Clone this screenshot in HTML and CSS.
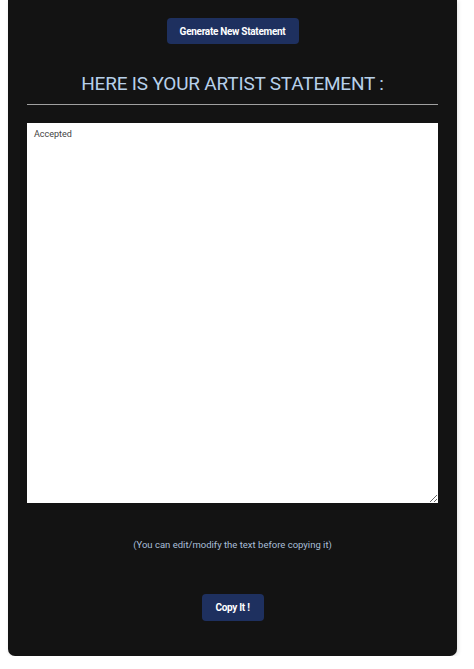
FILE: index.html
```html
<!DOCTYPE html>
<html>
<head>
<meta charset="utf-8">
<link rel="stylesheet" href="styles.css">
</head>
<body>
<div class="card">
  <button class="btn btn-gen">Generate New Statement</button>
  <h1 class="title">HERE IS YOUR ARTIST STATEMENT :</h1>
  <hr class="rule">
  <textarea class="statement">Accepted</textarea>
  <p class="hint">(You can edit/modify the text before copying it)</p>
  <button class="btn btn-copy">Copy It !</button>
</div>
</body>
</html>
```
FILE: styles.css
```css
html, body {
  margin: 0;
  padding: 0;
  background: #ffffff;
  font-family: Roboto, "Liberation Sans", sans-serif;
}
.card {
  width: 449px;
  margin-left: 8px;
  height: 656px;
  box-sizing: border-box;
  background: #131313;
  border-radius: 0 0 7px 7px;
  box-shadow: 1px 1px 4px rgba(0,0,0,0.12);
  display: flex;
  flex-direction: column;
  align-items: center;
  padding-top: 18px;
}
.btn {
  background: #1e305f;
  color: #ffffff;
  border: none;
  border-radius: 4px;
  font-family: Roboto, "Liberation Sans", sans-serif;
  font-weight: 700;
  font-size: 10px;
  letter-spacing: -0.3px;
  padding: 0;
}
.btn-gen {
  width: 132px;
  height: 26px;
}
.title {
  margin: 28px 0 0 0;
  font-weight: 400;
  font-size: 19px;
  line-height: 24px;
  color: #b7d0ea;
  letter-spacing: -0.2px;
}
.rule {
  width: 411px;
  margin: 8px 0 0 0;
  border: none;
  border-top: 1px solid #a0a0a0;
  height: 0;
}
.statement {
  margin-top: 18px;
  width: 411px;
  height: 380px;
  box-sizing: border-box;
  border: none;
  background: #ffffff;
  padding: 6px 7px;
  font-family: Roboto, "Liberation Sans", sans-serif;
  font-size: 9px;
  color: #444;
  resize: both;
  display: block;
}
.hint {
  margin: 35px 0 0 0;
  font-size: 9.5px;
  line-height: 14px;
  color: #a9bfd8;
}
.btn-copy {
  margin-top: 42px;
  width: 62px;
  height: 27px;
  font-size: 10px;
}
```
